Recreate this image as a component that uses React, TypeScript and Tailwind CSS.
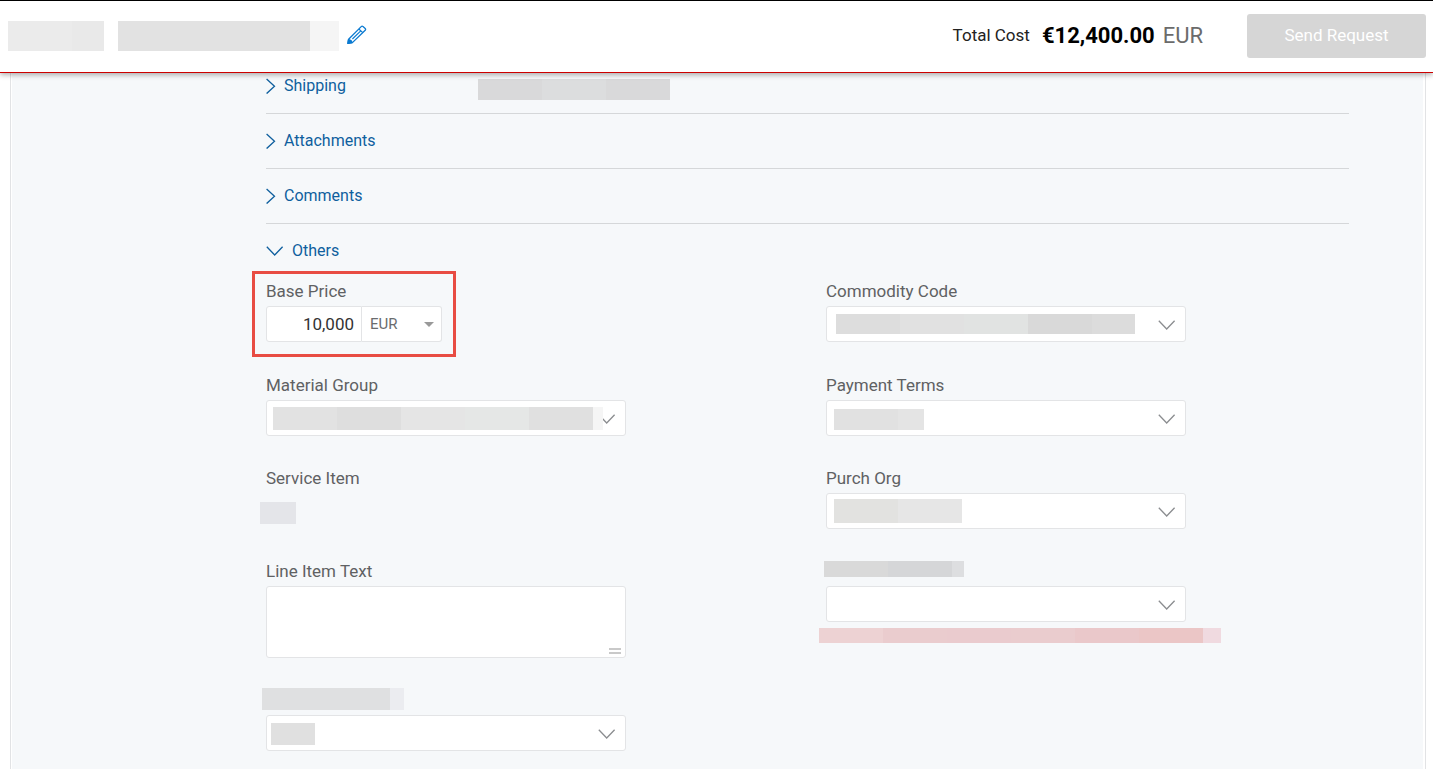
import { useState, type ReactNode } from "react";
import clsx from "clsx";

const fieldClass =
  "rounded-[3px] border border-[#e3e4e6] bg-white text-[17px] text-[#333] outline-none";

function Redacted({ cells, className }: { cells: string[]; className?: string }) {
  return (
    <span aria-hidden className={clsx("pointer-events-none flex", className)}>
      {cells.map((cell, i) => (
        <span key={i} className={clsx("h-full shrink-0", cell)} />
      ))}
    </span>
  );
}

function ChevronDown({ className }: { className?: string }) {
  return (
    <svg
      aria-hidden
      width="18"
      height="10"
      viewBox="0 0 18 10"
      fill="none"
      stroke="currentColor"
      strokeWidth="1.3"
      className={className}
    >
      <path d="M0.8 0.7 8.7 9 16.6 0.7" />
    </svg>
  );
}

function ChevronRight() {
  return (
    <svg
      aria-hidden
      width="10"
      height="16"
      viewBox="0 0 10 16"
      fill="none"
      stroke="currentColor"
      strokeWidth="1.3"
    >
      <path d="M0.6 1 8.5 8.3 0.6 15.6" />
    </svg>
  );
}

function PencilIcon() {
  return (
    <svg
      aria-hidden
      width="20"
      height="20"
      viewBox="0 0 20 20"
      fill="none"
      stroke="#0a7ad1"
      strokeWidth="1.3"
      strokeLinejoin="round"
    >
      <path d="M0.9 18.4 1.6 14.2 14.2 1.6Q15.1 0.7 16 1.6L18.2 3.5Q19 4.3 18.2 5.2L5.4 17.6Z" />
      <path d="M11.8 4 15.8 7.7M14 5.6 5.4 14" strokeWidth="1.1" />
      <path d="M0.9 18.4 1.5 14.6Q4.6 15 5 17.6Z" fill="#0a7ad1" />
    </svg>
  );
}

function Section({
  title,
  open,
  children,
}: {
  title: string;
  open?: boolean;
  children?: ReactNode;
}) {
  return (
    <div
      className={clsx(
        "flex h-[55px] items-center border-b",
        open ? "border-transparent" : "border-[#d5d7d9]",
      )}
    >
      <button
        type="button"
        aria-expanded={!!open}
        className="flex w-[212px] items-center gap-2 text-left text-base text-[#0f5f9e]"
      >
        {open ? <ChevronDown /> : <ChevronRight />}
        {title}
      </button>
      {children}
    </div>
  );
}

function Field({
  id,
  label,
  className,
  children,
}: {
  id: string;
  label: ReactNode;
  className?: string;
  children: ReactNode;
}) {
  return (
    <div className={clsx("relative w-[360px] max-w-full", className)}>
      <label
        htmlFor={id}
        className="mb-[3px] block h-6 text-[17px] leading-6 text-[#5f6163]"
      >
        {label}
      </label>
      {children}
    </div>
  );
}

function Select({ id, children }: { id: string; children?: ReactNode }) {
  return (
    <div className="relative">
      <select id={id} className={clsx(fieldClass, "block h-9 w-full appearance-none px-2")} />
      <ChevronDown className="pointer-events-none absolute right-[10px] top-[14px] text-[#8b8d90]" />
      {children}
    </div>
  );
}

export default function App() {
  const [price, setPrice] = useState("10,000");

  return (
    <div className="flex min-h-screen flex-col bg-white font-['Roboto',sans-serif]">
      <header className="sticky top-0 z-10 flex h-[73px] items-center border-y border-t-black border-b-[#cc0000] bg-white pb-[2px] pl-2 pr-[7px] shadow-[0_2px_5px_rgba(0,0,0,0.3)]">
        <Redacted className="h-[30px]" cells={["w-16 bg-[#ebebeb]", "w-8 bg-[#e9e9e9]"]} />
        <Redacted
          className="ml-[14px] h-[30px]"
          cells={["w-48 bg-[#e2e2e2]", "w-[29px] bg-[#f5f5f5]"]}
        />
        <button type="button" aria-label="Edit" className="ml-2 pb-[2px]">
          <PencilIcon />
        </button>
        <div className="ml-auto flex items-center">
          <span className="mr-3 text-[17px] text-[#222]">Total Cost</span>
          <span className="mr-2 text-[22px] font-bold text-black">€12,400.00</span>
          <span className="text-[22px] text-[#6b6b6b]">EUR</span>
        </div>
        <button
          type="button"
          disabled
          className="ml-11 h-11 w-[179px] rounded-[3px] bg-[#d6d6d6] text-[17px] text-white"
        >
          Send Request
        </button>
      </header>

      <main className="-mt-[14px] ml-[10px] mr-[7px] flex flex-1 flex-col border-x border-[#e2e3e5] pl-px pr-[2px]">
        <div className="flex-1 bg-[#f6f8fa] pb-4 pl-[254px] pr-[74px]">
          <Section title="Shipping">
            <Redacted
              className="mt-[6px] h-[21px]"
              cells={["w-16 bg-[#d9d9da]", "w-16 bg-[#dcddde]", "w-16 bg-[#d9d9da]"]}
            />
          </Section>
          <Section title="Attachments" />
          <Section title="Comments" />
          <Section title="Others" open />

          <div className="grid grid-cols-2 items-start gap-x-[37px] gap-y-[30px]">
            <Field id="base-price" label="Base Price" className="h-16">
              <div className="flex w-44">
                <input
                  id="base-price"
                  value={price}
                  onChange={(e) => setPrice(e.target.value)}
                  className={clsx(fieldClass, "h-9 w-24 rounded-r-none pr-[7px] text-right")}
                />
                <div className="relative flex-1">
                  <select
                    aria-label="Currency"
                    className="block h-9 w-full appearance-none rounded-r-[3px] border border-l-0 border-[#e3e4e6] bg-white pl-2 text-[15px] text-[#6a6c6e] outline-none"
                  >
                    <option>EUR</option>
                  </select>
                  <svg
                    aria-hidden
                    width="10"
                    height="5"
                    viewBox="0 0 10 5"
                    className="pointer-events-none absolute right-2 top-4"
                  >
                    <path d="M0 0h10L5 5z" fill="#999" />
                  </svg>
                </div>
                {/* callout frame */}
                <span
                  aria-hidden
                  className="pointer-events-none absolute -bottom-[14px] -left-[14px] -top-2 w-[204px] border-[3px] border-[#e84c43]"
                />
              </div>
            </Field>
            <Field id="commodity" label="Commodity Code">
              <Select id="commodity">
                <Redacted
                  className="absolute left-[10px] top-2 h-5"
                  cells={[
                    "w-16 bg-[#dddddd]",
                    "w-16 bg-[#e1e1e1]",
                    "w-16 bg-[#e1e3e2]",
                    "w-16 bg-[#d9d9d9]",
                    "w-[43px] bg-[#dcdcdc]",
                  ]}
                />
              </Select>
            </Field>

            <Field id="material" label="Material Group">
              <Select id="material">
                <Redacted
                  className="absolute left-[7px] top-[7px] h-[23px]"
                  cells={[
                    "w-16 bg-[#e2e2e2]",
                    "w-16 bg-[#dedede]",
                    "w-16 bg-[#e5e5e5]",
                    "w-16 bg-[#e5e7e6]",
                    "w-16 bg-[#e0e0e0]",
                    "w-[10px] bg-[#f5f5f5]",
                  ]}
                />
              </Select>
            </Field>
            <Field id="payment" label="Payment Terms">
              <Select id="payment">
                <Redacted
                  className="absolute left-2 top-[9px] h-[21px]"
                  cells={["w-16 bg-[#e1e1e1]", "w-[26px] bg-[#e4e4e4]"]}
                />
              </Select>
            </Field>

            <div className="text-[17px] leading-6 text-[#5f6163]">
              Service Item
              <Redacted className="-ml-[6px] mt-3 h-[22px]" cells={["w-9 bg-[#e4e5e9]"]} />
            </div>
            <Field id="purch-org" label="Purch Org">
              <Select id="purch-org">
                <Redacted
                  className="absolute left-2 top-[6px] h-6"
                  cells={["w-16 bg-[#e2e2e0]", "w-16 bg-[#e6e6e6]"]}
                />
              </Select>
            </Field>

            <Field id="line-text" label="Line Item Text">
              <textarea
                id="line-text"
                className={clsx(fieldClass, "block h-[72px] w-full resize-none p-2")}
              />
              <span
                aria-hidden
                className="pointer-events-none absolute bottom-1 right-[5px] h-[6px] w-3 border-y-2 border-[#c9c9c9]"
              />
            </Field>
            <div>
              <Field
                id="hidden-code"
                label={
                  <Redacted
                    className="-ml-[2px] h-[18px] pt-[2px]"
                    cells={["w-16 bg-[#d9d9d9]", "w-16 bg-[#d5d6d8]", "w-3 bg-[#dddee0]"]}
                  />
                }
              >
                <Select id="hidden-code" />
              </Field>
              <Redacted
                className="-ml-[7px] mt-[6px] h-[15px]"
                cells={[
                  "w-16 bg-[#edd2d3]",
                  "w-16 bg-[#eaccce]",
                  "w-16 bg-[#eacbce]",
                  "w-16 bg-[#eaccce]",
                  "w-16 bg-[#eac8ca]",
                  "w-16 bg-[#ebc6c6]",
                  "w-[18px] bg-[#f0dae0]",
                ]}
              />
            </div>

            <Field
              id="hidden-unit"
              label={
                <Redacted
                  className="-ml-1 h-[22px]"
                  cells={["w-32 bg-[#dfe0e1]", "w-[14px] bg-[#ebecf0]"]}
                />
              }
            >
              <Select id="hidden-unit">
                <Redacted
                  className="absolute left-[5px] top-2 h-[22px]"
                  cells={["w-11 bg-[#e0e0e0]"]}
                />
              </Select>
            </Field>
          </div>
        </div>
      </main>
    </div>
  );
}
